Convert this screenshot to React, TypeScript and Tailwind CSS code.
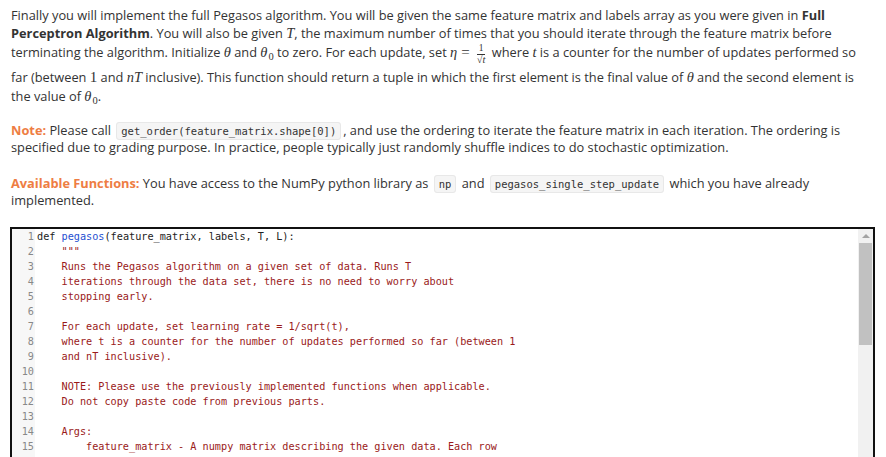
import React from "react";

const codeLines: { n: number; parts: { t: string; c?: string }[] }[] = [
  {
    n: 1,
    parts: [
      { t: "def ", c: "text-[#222]" },
      { t: "pegasos", c: "text-[#1f4fd1]" },
      { t: "(feature_matrix, labels, T, L):", c: "text-[#222]" },
    ],
  },
  { n: 2, parts: [{ t: '    """', c: "text-[#9a1a1a]" }] },
  { n: 3, parts: [{ t: "    Runs the Pegasos algorithm on a given set of data. Runs T", c: "text-[#9a1a1a]" }] },
  { n: 4, parts: [{ t: "    iterations through the data set, there is no need to worry about", c: "text-[#9a1a1a]" }] },
  { n: 5, parts: [{ t: "    stopping early.", c: "text-[#9a1a1a]" }] },
  { n: 6, parts: [{ t: "" }] },
  { n: 7, parts: [{ t: "    For each update, set learning rate = 1/sqrt(t),", c: "text-[#9a1a1a]" }] },
  { n: 8, parts: [{ t: "    where t is a counter for the number of updates performed so far (between 1", c: "text-[#9a1a1a]" }] },
  { n: 9, parts: [{ t: "    and nT inclusive).", c: "text-[#9a1a1a]" }] },
  { n: 10, parts: [{ t: "" }] },
  { n: 11, parts: [{ t: "    NOTE: Please use the previously implemented functions when applicable.", c: "text-[#9a1a1a]" }] },
  { n: 12, parts: [{ t: "    Do not copy paste code from previous parts.", c: "text-[#9a1a1a]" }] },
  { n: 13, parts: [{ t: "" }] },
  { n: 14, parts: [{ t: "    Args:", c: "text-[#9a1a1a]" }] },
  { n: 15, parts: [{ t: "        feature_matrix - A numpy matrix describing the given data. Each row", c: "text-[#9a1a1a]" }] },
  { n: 16, parts: [{ t: "            represents a single data point.", c: "text-[#9a1a1a]" }] },
  { n: 17, parts: [{ t: "        labels - A numpy array where the kth element of the array is the", c: "text-[#9a1a1a]" }] },
];

const M = ({ children }: { children: React.ReactNode }) => (
  <span className="font-['Liberation_Serif','DejaVu_Serif',serif] italic text-[14.5px] leading-none">{children}</span>
);

const Sub0 = () => (
  <span className="font-['Liberation_Serif',serif] text-[10.5px] leading-none relative top-[3px] ml-px">0</span>
);

const Code = ({ children }: { children: React.ReactNode }) => (
  <code className="font-['DejaVu_Sans_Mono','Liberation_Mono',monospace] text-[10.5px] leading-none bg-[#f5f5f5] border border-[#e8e8e8] rounded-[3px] px-[4px] py-[2px] mx-[2px] text-[#333]">
    {children}
  </code>
);

export default function App() {
  return (
    <div className="h-[457px] overflow-hidden bg-white px-[10px] font-['Open_Sans','Liberation_Sans',sans-serif] text-[12.8px] text-[#333]">
      <p className="pl-px pt-[6px] whitespace-nowrap">
        <span className="block leading-[18px]">
          Finally you will implement the full Pegasos algorithm. You will be given the same feature matrix and labels array as you were given in <b>Full</b>
        </span>
        <span className="block leading-[18px]">
          <b>Perceptron Algorithm</b>. You will also be given <M>T</M>, the maximum number of times that you should iterate through the feature matrix before
        </span>
        <span className="block h-[20px] leading-[19px] mt-[1px]">
          terminating the algorithm. Initialize <M>θ</M> and <M>θ</M>
          <Sub0 /> to zero. For each update, set <M>η</M>
          <span className="font-['Liberation_Serif',serif] text-[15px] leading-none px-[4px]">=</span>
          <span className="inline-block align-middle text-center font-['Liberation_Serif',serif] leading-none mx-[3px] relative top-[1px]">
            <span className="block text-[9.5px] border-b border-[#333] px-[1px]">1</span>
            <span className="block text-[10.5px]">
              √<i>t</i>
            </span>
          </span>{" "}
          where <M>t</M> is a counter for the number of updates performed so
        </span>
        <span className="block leading-[19px] mt-[5px]">
          far (between <span className="font-['Liberation_Serif',serif] text-[15px] leading-none">1</span> and <M>nT</M> inclusive). This function should return a tuple in which the first element is the final value of <M>θ</M> and the second element is
        </span>
        <span className="block leading-[19px]">
          the value of <M>θ</M>
          <Sub0 />.
        </span>
      </p>

      <p className="pl-px mt-[16px] leading-[17px] whitespace-nowrap">
        <b className="text-[#ee7d43]">Note:</b> Please call <Code>get_order(feature_matrix.shape[0])</Code>, and use the ordering to iterate the feature matrix in each iteration. The ordering is
        <br />
        specified due to grading purpose. In practice, people typically just randomly shuffle indices to do stochastic optimization.
      </p>

      <p className="pl-px mt-[19px] leading-[17px] whitespace-nowrap">
        <b className="text-[#ee7d43]">Available Functions:</b> You have access to the NumPy python library as <Code>np</Code> and <Code>pegasos_single_step_update</Code> which you have already
        <br />
        implemented.
      </p>

      <div className="mt-[18px] w-[865px] h-[300px] border-2 border-[#111] flex">
        <div className="w-[23px] shrink-0 bg-[#f7f7f7] font-['DejaVu_Sans_Mono','Liberation_Mono',monospace] text-[10.2px] leading-[15px] text-[#888] text-right pr-[1px]">
          {codeLines.map((l) => (
            <div key={l.n}>{l.n}</div>
          ))}
        </div>
        <div className="flex-1 pl-[2px] font-['DejaVu_Sans_Mono','Liberation_Mono',monospace] text-[10.2px] leading-[15px] whitespace-pre">
          {codeLines.map((l) => (
            <div key={l.n}>
              {l.parts.map((p, i) => (
                <span key={i} className={p.c}>
                  {p.t || " "}
                </span>
              ))}
            </div>
          ))}
        </div>
        <div className="w-[15px] shrink-0 bg-[#f1f1f1] flex flex-col items-center">
          <div className="h-[14px] flex items-center justify-center">
            <div className="w-0 h-0 border-l-[4px] border-r-[4px] border-b-[4px] border-l-transparent border-r-transparent border-b-[#a3a3a3]" />
          </div>
          <div className="w-[13px] h-[102px] bg-[#c1c1c1]" />
        </div>
      </div>
    </div>
  );
}
